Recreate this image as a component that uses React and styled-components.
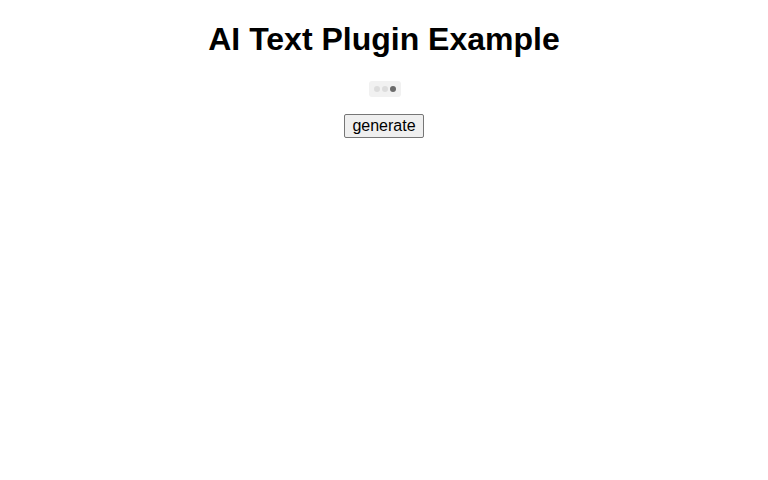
import styled, { createGlobalStyle } from "styled-components";

const GlobalStyle = createGlobalStyle`
  body {
    margin: 0;
    background: #ffffff;
    font-family: "Liberation Sans", Arial, sans-serif;
    color: #000;
  }
`;

const Page = styled.main`
  display: flex;
  flex-direction: column;
  align-items: center;
  padding-top: 21px;
`;

const Title = styled.h1`
  margin: 0;
  font-size: 32px;
  font-weight: 700;
  line-height: 37px;
`;

const Loader = styled.div`
  margin-top: 23px;
  margin-left: 1px;
  display: flex;
  align-items: center;
  justify-content: center;
  gap: 2px;
  width: 32px;
  height: 16px;
  border-radius: 3px;
  background: #f1f1f1;
`;

const Dot = styled.span`
  width: 6px;
  height: 6px;
  border-radius: 50%;
  background: ${(p) => (p.$active ? "#6b6b6b" : "#dcdcdc")};
`;

const Button = styled.button`
  margin-top: 17px;
  font-family: "Liberation Sans", Arial, sans-serif;
  font-size: 16px;
  line-height: 18px;
  padding: 2px 7px;
  color: #000;
  background: #efefef;
  border: 1px solid #767676;
  border-radius: 2px;
  cursor: pointer;
`;

export default function App() {
  return (
    <>
      <GlobalStyle />
      <Page>
        <Title>AI Text Plugin Example</Title>
        <Loader>
          <Dot />
          <Dot />
          <Dot $active />
        </Loader>
        <Button>generate</Button>
      </Page>
    </>
  );
}
